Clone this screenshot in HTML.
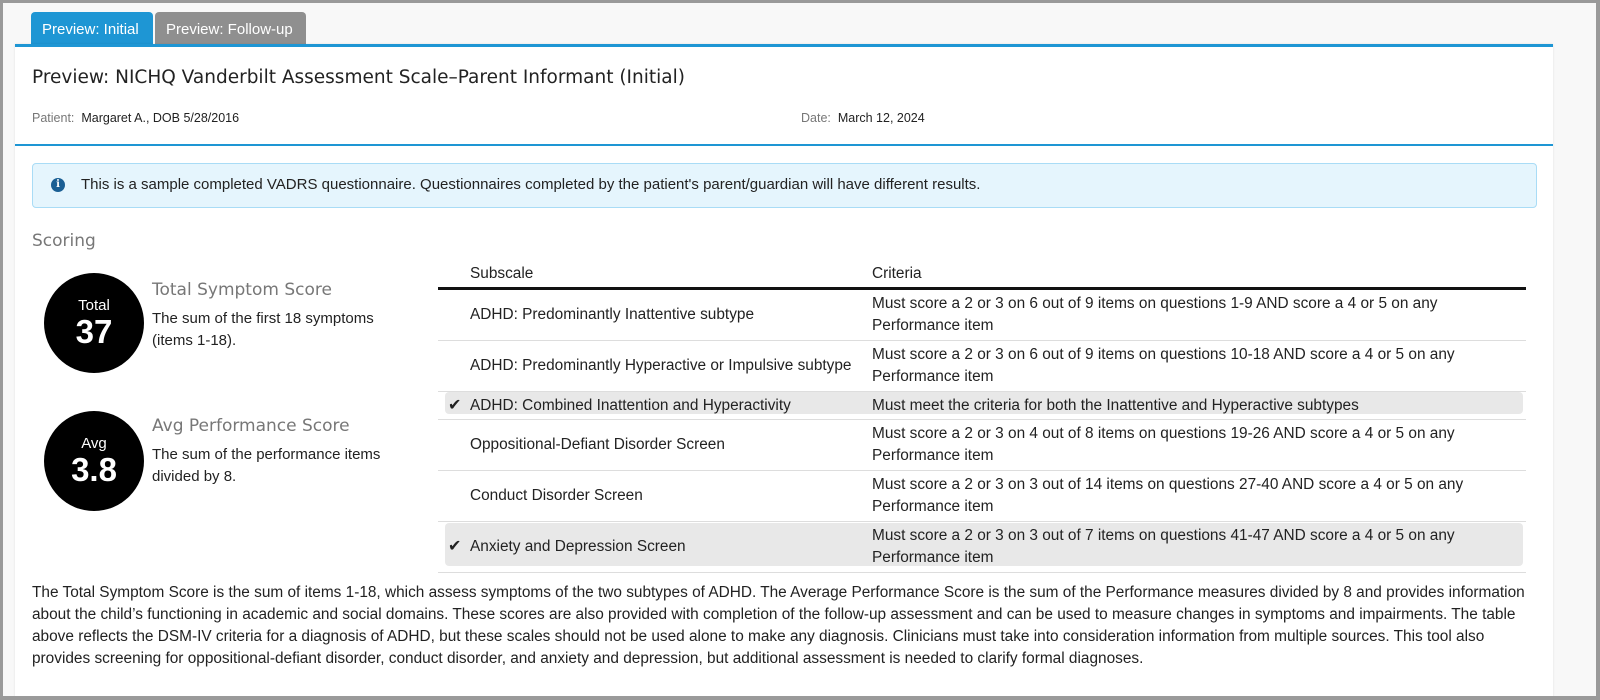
<!DOCTYPE html>
<html><head><style>
*{box-sizing:border-box}
body{margin:0;width:1600px;height:700px;overflow:hidden;font-family:"Liberation Sans",Arial,sans-serif;color:#222}
.frame{position:absolute;left:0;top:0;width:1600px;height:700px;border:3px solid #9a9a9a;border-right-width:4px;border-bottom-width:4px;background:#f8f8f8;overflow:hidden}
.tab{position:absolute;top:9px;height:35px;color:#fff;font-size:15px;line-height:35px;padding:0 11px;border-radius:4px 4px 0 0}
.panel{position:absolute;left:12px;top:41px;width:1538px;height:660px;background:#fff;border-top:3px solid #1e96d4;box-shadow:0 0 2px rgba(0,0,0,.1)}
.abs{position:absolute}
.circle{position:absolute;width:100px;height:100px;border-radius:50%;background:#000;color:#fff;text-align:center}
.circle .l{font-size:15px;margin-top:25px;line-height:16px}
.circle .n{font-size:33px;font-weight:bold;line-height:36px}
.h{font-family:"DejaVu Sans",sans-serif;color:#777;font-size:17px}
.d{font-size:15px;line-height:22px;color:#222}
table{position:absolute;left:423px;top:216px;width:1088px;table-layout:fixed;border-collapse:separate;border-spacing:0;font-size:15.4px}
th{text-align:left;font-weight:normal;padding:2px 0 4px 32px;border-bottom:3px solid #111;height:25px}
td{padding:0 0 0 32px;border-bottom:1px solid #ddd;line-height:22px;height:51px;position:relative}
td:first-child{white-space:nowrap}
tr.s td{height:28px}
.hlbg{position:absolute;background:#e8e8e8;border-radius:4px}
.chk{position:absolute;left:10px;font-size:16px}
</style></head><body>
<div class="frame">
<div class="tab" style="left:28px;background:#1e96d4;width:122px">Preview: Initial</div>
<div class="tab" style="left:152px;background:#8f8f8f;width:151px">Preview: Follow-up</div>
<div class="panel">
<div class="abs" style="left:17px;top:20px;font-family:'DejaVu Sans',sans-serif;font-size:18.5px;color:#222">Preview: NICHQ Vanderbilt Assessment Scale–Parent Informant (Initial)</div>
<div class="abs" style="left:17px;top:64px;font-size:12.5px"><span style="color:#777">Patient:</span>&nbsp;&nbsp;Margaret A., DOB 5/28/2016</div>
<div class="abs" style="left:786px;top:64px;font-size:12.5px"><span style="color:#777">Date:</span>&nbsp;&nbsp;March 12, 2024</div>
<div class="abs" style="left:0;top:97px;width:1538px;height:2px;background:#1e96d4"></div>
<div class="abs" style="left:17px;top:116px;width:1505px;height:45px;background:#e5f5fd;border:1px solid #a9dcf6;border-radius:4px"></div>
<div class="abs" style="left:36px;top:131px;width:14px;height:14px;border-radius:50%;background:#1a5f94;color:#fff;font-size:10px;font-weight:bold;text-align:center;line-height:14px;font-family:'DejaVu Serif',serif">i</div>
<div class="abs" style="left:66px;top:129px;font-size:15px">This is a sample completed VADRS questionnaire. Questionnaires completed by the patient's parent/guardian will have different results.</div>
<div class="abs h" style="left:17px;top:184px">Scoring</div>
<div class="circle" style="left:29px;top:226px"><div class="l">Total</div><div class="n">37</div></div>
<div class="abs h" style="left:137px;top:233px">Total Symptom Score</div>
<div class="abs d" style="left:137px;top:261px">The sum of the first 18 symptoms<br>(items 1-18).</div>
<div class="circle" style="left:29px;top:364px"><div class="l">Avg</div><div class="n">3.8</div></div>
<div class="abs h" style="left:137px;top:369px">Avg Performance Score</div>
<div class="abs d" style="left:137px;top:397px">The sum of the performance items<br>divided by 8.</div>
<div class="hlbg" style="left:430px;top:345px;width:1078px;height:22px"></div>
<div class="hlbg" style="left:430px;top:476px;width:1078px;height:43px"></div>
<table>
<tr><th style="width:402px">Subscale</th><th>Criteria</th></tr>
<tr><td>ADHD: Predominantly Inattentive subtype</td><td>Must score a 2 or 3 on 6 out of 9 items on questions 1-9 AND score a 4 or 5 on any<br>Performance item</td></tr>
<tr><td>ADHD: Predominantly Hyperactive or Impulsive subtype</td><td>Must score a 2 or 3 on 6 out of 9 items on questions 10-18 AND score a 4 or 5 on any<br>Performance item</td></tr>
<tr class="s"><td><span class="chk">✔</span>ADHD: Combined Inattention and Hyperactivity</td><td>Must meet the criteria for both the Inattentive and Hyperactive subtypes</td></tr>
<tr><td>Oppositional-Defiant Disorder Screen</td><td>Must score a 2 or 3 on 4 out of 8 items on questions 19-26 AND score a 4 or 5 on any<br>Performance item</td></tr>
<tr><td>Conduct Disorder Screen</td><td>Must score a 2 or 3 on 3 out of 14 items on questions 27-40 AND score a 4 or 5 on any<br>Performance item</td></tr>
<tr><td><span class="chk">✔</span>Anxiety and Depression Screen</td><td>Must score a 2 or 3 on 3 out of 7 items on questions 41-47 AND score a 4 or 5 on any<br>Performance item</td></tr>
</table>
<div class="abs" style="left:17px;top:535px;width:1520px;font-size:15.4px;line-height:22px;white-space:nowrap">The Total Symptom Score is the sum of items 1-18, which assess symptoms of the two subtypes of ADHD. The Average Performance Score is the sum of the Performance measures divided by 8 and provides information<br>about the child’s functioning in academic and social domains. These scores are also provided with completion of the follow-up assessment and can be used to measure changes in symptoms and impairments. The table<br>above reflects the DSM-IV criteria for a diagnosis of ADHD, but these scales should not be used alone to make any diagnosis. Clinicians must take into consideration information from multiple sources. This tool also<br>provides screening for oppositional-defiant disorder, conduct disorder, and anxiety and depression, but additional assessment is needed to clarify formal diagnoses.</div>
</div>
</div>
</body></html>
